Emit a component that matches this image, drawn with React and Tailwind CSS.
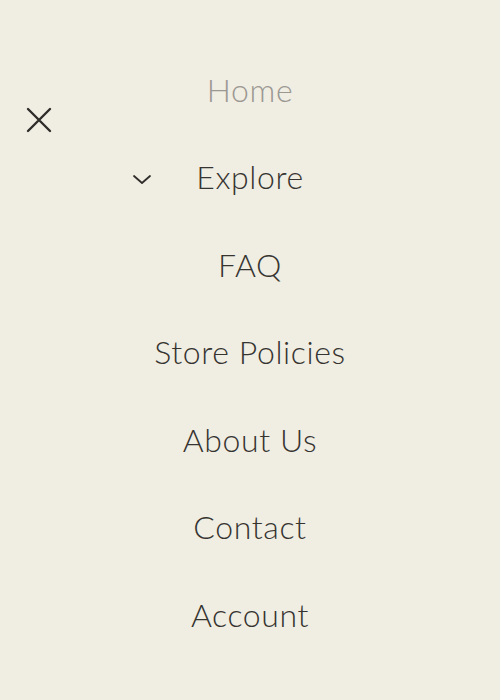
import { useState } from "react";

const links = ["Home", "Explore", "FAQ", "Store Policies", "About Us", "Contact", "Account"];

export default function App() {
  const [active] = useState("Home");

  return (
    <div
      className="relative w-[500px] h-[700px] bg-[#f0ede3] overflow-hidden"
      style={{ fontFamily: "Lato, 'Open Sans', sans-serif" }}
    >
      {/* close button */}
      <button className="absolute left-[26px] top-[107px] w-[26px] h-[26px] text-[#2f2d2a]" aria-label="Close menu">
        <svg viewBox="0 0 26 26" width="26" height="26" fill="none" stroke="currentColor" strokeWidth="2.4" strokeLinecap="round">
          <path d="M2 2 L24 24 M24 2 L2 24" />
        </svg>
      </button>

      <nav className="flex flex-col items-center pt-[46px]">
        {links.map((label) => (
          <div key={label} className="relative h-[87.5px] flex items-center">
            {label === "Explore" && (
              <svg
                className="absolute right-full mr-[44px] top-1/2 -translate-y-[3px]"
                viewBox="0 0 20 11"
                width="20"
                height="11"
                fill="none"
                stroke="#2f2d2a"
                strokeWidth="1.8"
                strokeLinecap="round"
                strokeLinejoin="round"
              >
                <path d="M2 2 L10 9 L18 2" />
              </svg>
            )}
            <a
              href="#"
              className={`text-[32px] font-light leading-none tracking-[0.6px] ${
                label === active ? "text-[#9b9892]" : "text-[#363430]"
              }`}
            >
              {label}
            </a>
          </div>
        ))}
      </nav>
    </div>
  );
}
